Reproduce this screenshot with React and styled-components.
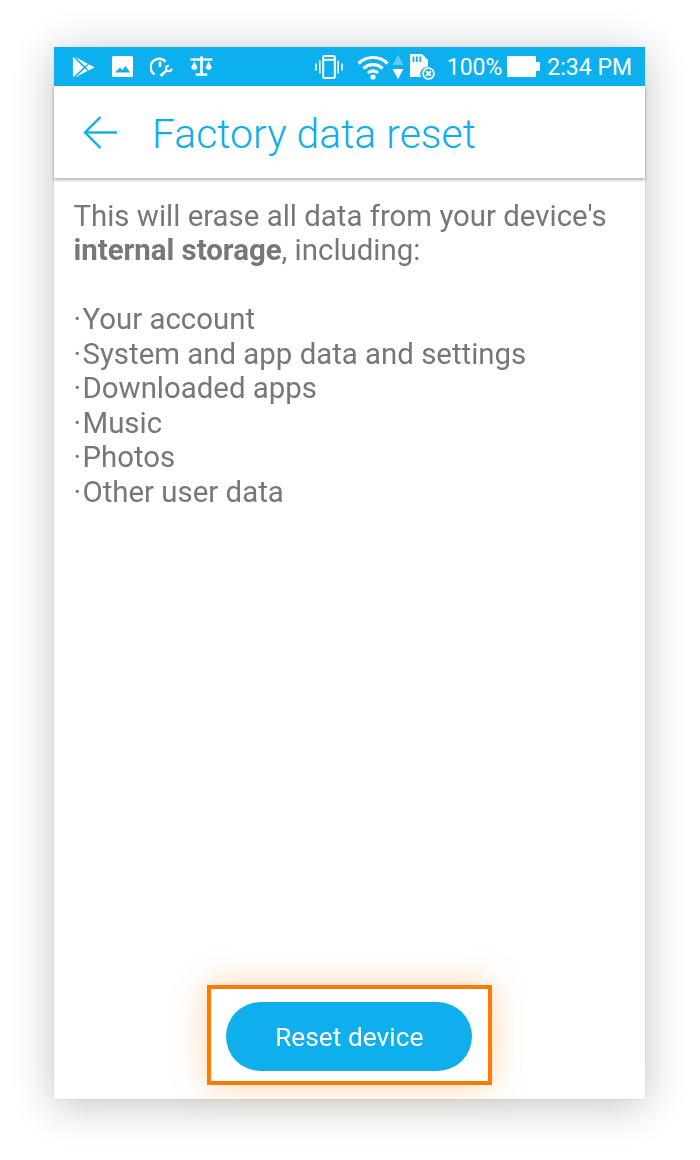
import React from "react";
import styled, { createGlobalStyle } from "styled-components";

const GlobalStyle = createGlobalStyle`
  html, body {
    margin: 0;
    padding: 0;
    background: #fff;
  }
`;

const Page = styled.div`
  width: 700px;
  height: 1160px;
  box-sizing: border-box;
  padding: 47px 55px 61px 54px;
  font-family: Roboto, "Liberation Sans", sans-serif;
  overflow: hidden;
`;

const Screen = styled.div`
  height: 100%;
  display: flex;
  flex-direction: column;
  background: #fff;
  box-shadow: 0 0 1px rgba(0, 0, 0, 0.2), 0 6px 40px rgba(0, 0, 0, 0.24);
`;

const StatusBar = styled.div`
  height: 39px;
  flex: none;
  display: flex;
  align-items: center;
  justify-content: space-between;
  padding: 0 13px 0 18px;
  background: #0db0ee;
  color: #fff;
`;

const IconGroup = styled.div`
  display: flex;
  align-items: center;
  gap: ${({ $gap }) => $gap}px;
  margin-left: ${({ $left }) => $left || 0}px;
`;

const StatusText = styled.span`
  font-size: 23px;
  line-height: 39px;
  padding-top: 2px;
  white-space: nowrap;
  margin-left: ${({ $left }) => $left || 0}px;
`;

const Header = styled.header`
  height: 92px;
  flex: none;
  display: flex;
  align-items: center;
  gap: 35px;
  padding: 0 0 0 29px;
  background: #fff;
  box-shadow: 0 2px 3px rgba(0, 0, 0, 0.3);
  position: relative;
`;

const Title = styled.h1`
  margin: 0;
  padding-top: 3px;
  font-size: 40.9px;
  font-weight: 300;
  color: #0eaeeb;
  white-space: nowrap;
`;

const Content = styled.main`
  flex: 1;
  display: flex;
  flex-direction: column;
  padding: 20.5px 20px 0 19.5px;
  color: #777;
  font-size: 29.4px;
  line-height: 34.5px;
  will-change: opacity;
`;

const Intro = styled.p`
  margin: 0 0 34.5px;
  white-space: nowrap;

  strong {
    font-weight: 700;
  }
`;

const List = styled.ul`
  flex: 1;
  margin: 0;
  padding: 0;
  list-style: none;
`;

const Item = styled.li`
  white-space: nowrap;
  &::before {
    content: "·";
    display: inline-block;
    width: 9px;
  }
`;

const Footer = styled.div`
  display: flex;
  justify-content: center;
  padding-bottom: 14px;
`;

const Highlight = styled.div`
  box-sizing: border-box;
  width: 285px;
  height: 100px;
  display: flex;
  align-items: center;
  justify-content: center;
  padding-top: 3px;
  border: 4px solid #ff7a00;
  background: #fff;
  box-shadow: 0 0 32px rgba(255, 140, 40, 0.38);
`;

const ResetButton = styled.button`
  width: 246px;
  height: 69px;
  border: 0;
  border-radius: 35px;
  background: #0eafec;
  color: #fff;
  font-family: inherit;
  font-size: 26.3px;
  padding: 0;
`;

const Play = () => (
  <svg width="23" height="24" viewBox="0 0 24 24" fill="#fff">
    <path d="M1 1 L1 23 L12 12.6 Z" />
    <path d="M3.5 1.5 L13.5 11.2 L16.5 8.6 Z" />
    <path d="M3.5 23 L13.5 13.4 L16.5 16 Z" />
    <path d="M17.5 9 L23.5 12.2 L17.5 15.6 L14.6 12.3 Z" />
  </svg>
);

const Picture = () => (
  <svg width="21" height="21" viewBox="0 0 21 21">
    <path
      fill="#fff"
      fillRule="evenodd"
      d="M1.5 0H19.5A1.5 1.5 0 0 1 21 1.5V19.5A1.5 1.5 0 0 1 19.5 21H1.5A1.5 1.5 0 0 1 0 19.5V1.5A1.5 1.5 0 0 1 1.5 0ZM3 16.5H18L13.5 10L10.4 14.2L8 11.6Z"
    />
  </svg>
);

const Gauge = () => (
  <svg width="23" height="21" viewBox="0 0 23 21" fill="none" stroke="#fff">
    <path d="M4.6 18.6A8.6 8.6 0 1 1 15.6 5.6" strokeWidth="2.4" />
    <path d="M10 5.5V11" strokeWidth="2.6" />
    <path d="M10.5 20 L16.6 14.4" strokeWidth="2.6" />
    <path d="M21.6 12.5A2.8 2.8 0 1 1 18.8 9.7" strokeWidth="2" />
  </svg>
);

const Scales = () => (
  <svg width="23" height="21" viewBox="0 0 24 21" fill="#fff">
    <rect x="0.5" y="2" width="23" height="2.4" />
    <rect x="10.6" y="0" width="2.8" height="18" />
    <rect x="6" y="17.6" width="12" height="2.6" />
    <path d="M4.5 5 L7.8 11.5 A3.4 3.4 0 0 1 1.2 11.5 Z" />
    <path d="M19.5 5 L22.8 11.5 A3.4 3.4 0 0 1 16.2 11.5 Z" />
  </svg>
);

const Vibrate = () => (
  <svg width="28" height="24" viewBox="0 0 28 24" fill="none" stroke="#fff">
    <rect x="8.2" y="1" width="11.6" height="22" rx="1.2" strokeWidth="2" />
    <path d="M9 4.8H19" strokeWidth="2" />
    <path d="M4.8 5.5V18.5M1 8.5V15.5M23.2 5.5V18.5M27 8.5V15.5" strokeWidth="1.6" />
  </svg>
);

const Wifi = () => (
  <svg width="32" height="26" viewBox="0 0 32 26" fill="none" stroke="#fff" strokeWidth="3.2">
    <path d="M1.5 9.5A20.5 20.5 0 0 1 30.5 9.5" />
    <path d="M6.5 14.5A13.5 13.5 0 0 1 25.5 14.5" />
    <path d="M11 19A7 7 0 0 1 21 19" />
    <circle cx="16" cy="23" r="2.6" fill="#fff" stroke="none" />
  </svg>
);

const Arrows = () => (
  <svg width="12" height="26" viewBox="0 0 12 26">
    <path d="M6 1 L11.5 11 H0.5 Z" fill="#fff" opacity="0.35" />
    <path d="M0.5 15 H11.5 L6 25 Z" fill="#fff" />
  </svg>
);

const SdCard = () => (
  <svg width="27" height="26" viewBox="0 0 27 26">
    <path
      fill="#fff"
      fillRule="evenodd"
      d="M1 0H13L19 6V13A7 7 0 0 0 12 23H1ZM3.6 2.4V8H5.4V2.4ZM7 2.4V8H8.8V2.4ZM10.4 2.4V8H12.2V2.4Z"
    />
    <circle cx="19.5" cy="19.5" r="5.4" fill="none" stroke="#fff" strokeWidth="1.8" />
    <path d="M17.2 17.2L21.8 21.8M21.8 17.2L17.2 21.8" stroke="#fff" strokeWidth="2" />
  </svg>
);

const Battery = () => (
  <svg width="33" height="21" viewBox="0 0 33 21" fill="#fff">
    <rect x="0" y="0" width="29" height="21" />
    <rect x="29" y="6" width="4" height="9" />
  </svg>
);

const BackArrow = () => (
  <svg width="34" height="33" viewBox="0 0 34 33" fill="none" stroke="#0eaeeb" strokeWidth="2.4">
    <path d="M34 16.5H2" />
    <path d="M17.5 1L2 16.5L17.5 32" />
  </svg>
);

const ITEMS = [
  "Your account",
  "System and app data and settings",
  "Downloaded apps",
  "Music",
  "Photos",
  "Other user data",
];

export default function App() {
  return (
    <>
      <GlobalStyle />
      <Page>
        <Screen>
          <StatusBar>
            <IconGroup $gap={17}>
              <Play />
              <Picture />
              <Gauge />
              <Scales />
            </IconGroup>
            <IconGroup $gap={5}>
              <Vibrate />
              <IconGroup $gap={3} $left={9}>
                <Wifi />
                <Arrows />
              </IconGroup>
              <SdCard />
              <StatusText $left={6}>100%</StatusText>
              <Battery />
              <StatusText $left={2}>2:34 PM</StatusText>
            </IconGroup>
          </StatusBar>
          <Header>
            <BackArrow />
            <Title>Factory data reset</Title>
          </Header>
          <Content>
            <Intro>
              This will erase all data from your device's
              <br />
              <strong>internal storage</strong>, including:
            </Intro>
            <List>
              {ITEMS.map((item) => (
                <Item key={item}>{item}</Item>
              ))}
            </List>
            <Footer>
              <Highlight>
                <ResetButton>Reset device</ResetButton>
              </Highlight>
            </Footer>
          </Content>
        </Screen>
      </Page>
    </>
  );
}
